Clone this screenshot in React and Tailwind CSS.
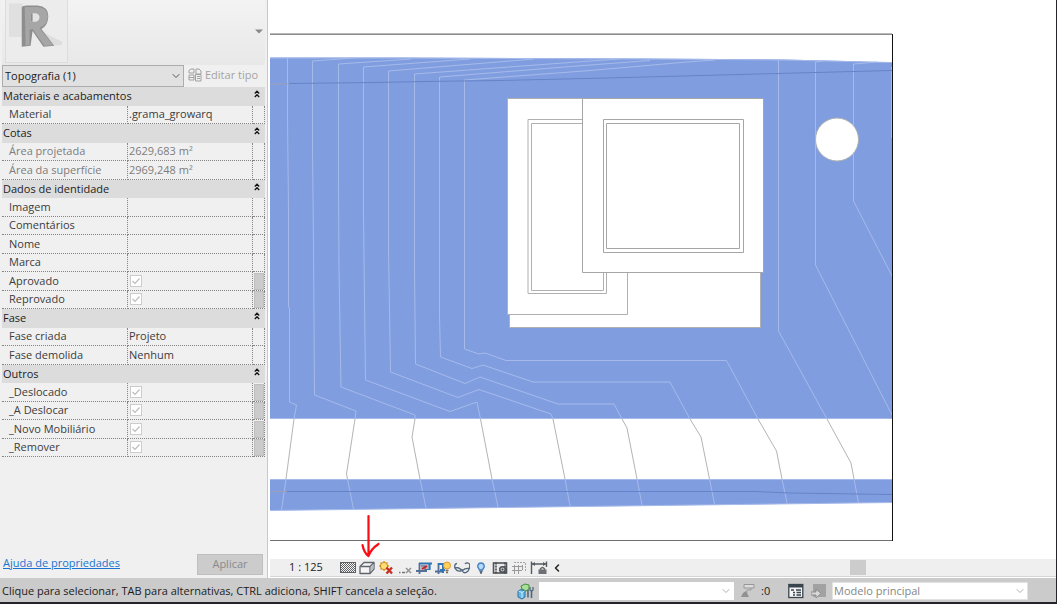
import React from "react";
import { ChevronDown, ChevronLeft } from "lucide-react";

const GROUPS = [
  { title: "Materiais e acabamentos", rows: [{ label: "Material", value: ".grama_growarq" }] },
  {
    title: "Cotas",
    rows: [
      { label: "Área projetada", value: "2629,683 m²", muted: true },
      { label: "Área da superfície", value: "2969,248 m²", muted: true },
    ],
  },
  {
    title: "Dados de identidade",
    rows: [
      { label: "Imagem" },
      { label: "Comentários" },
      { label: "Nome" },
      { label: "Marca" },
      { label: "Aprovado", check: true },
      { label: "Reprovado", check: true },
    ],
  },
  {
    title: "Fase",
    rows: [
      { label: "Fase criada", value: "Projeto" },
      { label: "Fase demolida", value: "Nenhum" },
    ],
  },
  {
    title: "Outros",
    rows: [
      { label: "_Deslocado", check: true },
      { label: "_A Deslocar", check: true },
      { label: "_Novo Mobiliário", check: true },
      { label: "_Remover", check: true },
    ],
  },
];

const CONTOURS = [
  "M287.5 58V116L288.5 212V307L289.5 308V402L296.5 405L294 419",
  "M354 58L312.5 61V149L313.5 245L314.5 395L356 411L355 419",
  "M411 59L338.5 64V183L339 270L341 387L415 415V419",
  "M470 59L363.5 67V216L364.5 300L365.5 380L450 411.5L477 402L480.5 419",
  "M534 59L388.5 71V250L390.5 372L458 397.5L479 389.5L551 414L553 419",
  "M620 59L590 61L414.5 74V270L415.5 364L465 383.5L480 377L558 404H614L622 419",
  "M650 60.5L590 65L439.5 77V316L440.5 357L472 368.5L483 365L533 382H670L690 419",
  "M715 60L687 62L590 70.5L464.5 80V349L479 354L485 353L506 360.5H726.5L758 419",
  "M778.5 59V331L827 419",
  "M823 61L815.5 62V265L892 415",
  "M877 62L853.5 64V201L892 276",
  "M891.5 67V138",
];

const STRIP_CONTOURS = [
  "M294 419L286 479",
  "M355 419L346.500 474L347.500 479",
  "M415 419L412 437L420 479",
  "M480.500 419L492 479",
  "M553 419L565 479",
  "M622 419L627 428L637 479",
  "M690 419L701 437L709.500 479",
  "M758 419L776.500 451L782 479",
  "M827 419L851 463L854 479",
];

const BAND_CONTOURS = [
  "M286 479L281.5 510",
  "M347.5 479L353.5 509",
  "M420 479L426 508",
  "M492 479L498 507",
  "M565 479L570 506",
  "M637 479L642 505",
  "M709.5 479L714.5 504",
  "M782 479L787 503",
  "M854 479L858.5 503",
];

function SitePlan() {
  return (
    <svg viewBox="270 0 786 559" preserveAspectRatio="xMinYMin meet" className="block w-full" role="img" aria-label="Topografia">
      <path d="M270 57.500L398 57.500L642 58.500L784 59.500L847 61L892 62.500V419H270Z" fill="#809edf" />
      <path d="M270 479H892V502.500L270 510.500Z" fill="#809edf" />
      <g fill="none" stroke="#a6baea" strokeWidth="1">
        <path d="M270 58L398 58L642 59L784 60L847 61.500L892 62.500" />
        <path d="M270 418.500H892M270 479.500H892M270 510.500L892 502.500" />
        {CONTOURS.map((d) => <path key={d} d={d} />)}
        {BAND_CONTOURS.map((d) => <path key={d} d={d} />)}
      </g>
      <g fill="none" stroke="#6583c8" strokeWidth="1">
        <path d="M289 83.500L375 82.500L424 81.500L500 80.500L607 78L892 70.500" />
        <path d="M287 491.500H755L790 493L892 494.500" />
      </g>
      <path d="M270 84.500L289 83.500M270 491.500H287" stroke="#9aa0b8" fill="none" />
      <g fill="none" stroke="#b4b4b4" strokeWidth="1">
        {STRIP_CONTOURS.map((d) => <path key={d} d={d} />)}
      </g>
      <g fill="#fff" stroke="#b0b0b0" strokeWidth="1">
        <path d="M509.500 272.500H760.500V327.500H509.500Z" />
        <path d="M507.500 98.500H627.500V314.500H507.500Z" />
        <path d="M528 119.500H606.500V293.500H528Z" />
        <path d="M531.500 123.500H603.500V290.500H531.500Z" />
        <path d="M582.500 98.500H763.500V272.500H582.500Z" stroke="#a6a6a6" />
        <path d="M603.500 119.500H743.500V252.500H603.500Z" stroke="#a6a6a6" />
        <path d="M606.500 123.500H739.500V248.500H606.500Z" stroke="#a6a6a6" />
        <circle cx="837" cy="139.500" r="21.500" />
      </g>
      <path d="M270 33.500H892" stroke="#b8b8b8" />
      <path d="M270 34.500H892" stroke="#8e8e8e" />
      <path d="M270 540.500H893" stroke="#6e6e6e" />
      <path d="M892.500 34V541" stroke="#111" />
      <path d="M368.500 516V554M362.500 545Q364 553 368.500 556Q371 549 378.500 544" fill="none" stroke="#fb0d14" strokeWidth="2.200" strokeLinecap="round" strokeLinejoin="round" />
    </svg>
  );
}

function Icon({ children, label }) {
  return (
    <button type="button" aria-label={label} className="h-4 w-4">
      <svg viewBox="0 0 16 16" className="h-4 w-4" fill="none">{children}</svg>
    </button>
  );
}

function ViewIcons() {
  const dots = [];
  for (let y = 3; y < 12; y++) for (let x = 1 + (y % 2); x < 15; x += 2) dots.push([x, y]);
  return (
    <div className="flex items-center gap-[3px]">
      <Icon label="Nível de detalhe">
        <rect x="0" y="2" width="16" height="11" fill="#5e6267" />
        {dots.map(([x, y]) => <rect key={x + "-" + y} x={x} y={y} width="1" height="1" fill="#f4f4f4" />)}
      </Icon>
      <Icon label="Estilo visual">
        <path d="M1 6.500L5 2.500H15V9L11 13.500H1Z" fill="#f5f5f5" stroke="#5f656c" strokeWidth="1.300" strokeLinejoin="round" />
        <path d="M1.500 6.500H11V13M11 6.500L15 2.500" stroke="#5f656c" strokeWidth="1.300" />
        <path d="M11.700 7L14.500 4V8.700L11.700 12Z" fill="#b9bec4" />
      </Icon>
      <Icon label="Caminho do sol">
        <path d="M6 1V11M1 6H11M2.500 2.500L9.500 9.500M9.500 2.500L2.500 9.500" stroke="#d99b22" strokeWidth="1.400" />
        <circle cx="6" cy="6" r="3.600" fill="#ffdf75" stroke="#c98b1c" />
        <path d="M8.500 7.500L14 13.500M14 7.500L8.500 13.500" stroke="#c92b25" strokeWidth="2.300" />
      </Icon>
      <Icon label="Sombras">
        <path d="M2 12.500H3.500M5 12.500H8" stroke="#777" strokeWidth="1.300" />
        <path d="M9 8L14 13M14 8L9 13" stroke="#969696" strokeWidth="1.600" />
      </Icon>
      <Icon label="Cortar vista">
        <path d="M3.500 3V14M0 11H11" stroke="#536f95" strokeWidth="1.800" />
        <rect x="5" y="5" width="7" height="5" fill="#f3a3a0" />
        <path d="M3 3.500H16M13.500 3V10" stroke="#3374b5" strokeWidth="2.200" />
        <path d="M5 6H9V10M9 9.500H13" stroke="#3374b5" strokeWidth="1.200" />
        <path d="M6 9L11 6" stroke="#b42725" strokeWidth="1.800" />
      </Icon>
      <Icon label="Mostrar região de recorte">
        <path d="M3.500 3V14M0 11.500H8" stroke="#536f95" strokeWidth="1.800" />
        <path d="M3 4H9M8 4V13M5 10H10" stroke="#3374b5" strokeWidth="2" />
        <circle cx="12" cy="5.500" r="3.500" fill="#ffd25f" stroke="#e09a2a" />
        <path d="M10.500 10.500H13.500M11 12.500H13" stroke="#7d6a50" strokeWidth="1.400" />
      </Icon>
      <Icon label="Ocultar temporariamente">
        <path d="M1 8Q0 4 3 3.500M1 8Q4 7 7 10M15 9Q17 4 14 3Q12 2.500 11 4" stroke="#53677c" strokeWidth="1.300" />
        <path d="M1 8Q3 12 7 11V9.500Q4 7 1 8ZM8.500 10.500Q9 13.500 12 12.500Q15 11 15 8.500Q11 8 8.500 10.500ZM7 10H9" fill="#e3e8ec" stroke="#53677c" strokeWidth="1.300" />
      </Icon>
      <Icon label="Revelar elementos ocultos">
        <path d="M8 3A3.200 3.200 0 0 1 10.300 8.500L9.500 10H6.500L5.700 8.500A3.200 3.200 0 0 1 8 3Z" fill="#b5d9ff" stroke="#427fc0" strokeWidth="1.400" />
        <path d="M6.500 11.500H9.500M7 13H9" stroke="#5d6875" strokeWidth="1.300" />
      </Icon>
      <Icon label="Propriedades da vista temporárias">
        <rect x="1.500" y="3" width="13" height="10" fill="#e8e8e8" stroke="#4f545a" strokeWidth="1.600" />
        <path d="M4 2.500V13.500M13 2.500V13.500" stroke="#45494f" strokeWidth="1.600" strokeDasharray="2 1" />
        <circle cx="10.500" cy="9.500" r="2.800" fill="#c8cacc" stroke="#494c50" strokeWidth="1.500" />
        <circle cx="10.500" cy="9.500" r="1" fill="#444" />
      </Icon>
      <Icon label="Modelo analítico">
        <path d="M1 6.500H12M1 10.500H11M3.500 5V14M7.500 5V14M11.500 5V10" stroke="#9a9a9a" />
        <path d="M3 2.500H14M14.500 3V12" stroke="#a4a4a4" strokeDasharray="2 1" />
      </Icon>
      <button type="button" aria-label="Revelar restrições" className="h-4 w-[18px]">
        <svg viewBox="0 0 18 16" className="h-4 w-[18px]" fill="none">
          <path d="M1.500 1.500V14M16.500 1.500V7M2 4H16" stroke="#555a60" strokeWidth="1.400" />
          <path d="M2 4L5 2V6ZM16 4L13 2V6Z" fill="#555a60" />
          <path d="M10.500 10V9Q12.500 6 14.500 9V10" stroke="#666" strokeWidth="1.500" />
          <rect x="8.500" y="9.500" width="8" height="4.500" fill="#6c6f73" />
        </svg>
      </button>
      <button type="button" aria-label="Recolher" className="flex h-4 w-3 items-center text-[#222]"><ChevronLeft size={12} strokeWidth={3} /></button>
    </div>
  );
}

function CollapseIcon() {
  return (
    <svg viewBox="0 0 6 8" className="h-2 w-1.5" fill="none" stroke="#111" strokeWidth="1.300">
      <path d="M.8 3.500L3 1.200L5.200 3.500M.8 7L3 4.700L5.200 7" />
    </svg>
  );
}

function PropertyRow({ row }) {
  const id = "prop-" + row.label.replace(/\s/g, "-");
  const tone = row.muted ? "text-[#7d7d7d]" : "text-[#3c3c3c]";
  return (
    <tr className={"odd:h-[19px] even:h-[18px] " + tone}>
      <th scope="row" className="border-b border-r border-dotted border-[#858585] pt-0 pb-px pl-[7px] text-left font-normal">
        {row.check ? <label htmlFor={id}>{row.label}</label> : row.label}
      </th>
      <td className="border-b border-r border-dotted border-[#858585] pt-0 pb-px pl-px">
        {row.check ? (
          <span className="ml-px grid h-3 w-3 place-items-center">
            <input id={id} type="checkbox" defaultChecked disabled className="col-start-1 row-start-1 h-3 w-3 appearance-none border border-[#cccccc] bg-white" />
            <svg viewBox="0 0 12 12" className="pointer-events-none col-start-1 row-start-1 h-3 w-3" fill="none">
              <path d="M2.500 6L5 8.500L9.500 3.500" stroke="#bdbdbd" strokeWidth="1.200" />
            </svg>
          </span>
        ) : row.value}
      </td>
      <td className="border-b border-r border-dotted border-[#858585] p-0 pl-px">
        {row.check && <button type="button" disabled aria-label={"Associar " + row.label} className="block h-[17px] w-full border border-[#bfbfbf] bg-[#cbcbcb]" />}
      </td>
    </tr>
  );
}

function Properties() {
  return (
    <aside className="flex w-[270px] shrink-0 flex-col border-r-2 border-white bg-[#f0f0f0]">
      <div className="flex flex-1 flex-col border-r border-[#c8c8c8] pl-0.5 pr-[2px]">
        <div className="flex h-[65px] items-start justify-between bg-linear-to-b from-[#f3f3f3] to-[#e8e8e8] pl-[3px]">
          <div className="h-[63px] w-[63px] border border-t-0 border-[#dcdcdc] bg-[#ececec]">
            <svg viewBox="0 0 62 62" className="h-full w-full">
              <path d="M3 3H17V37H3Z" fill="#e0e0e0" />
              <path d="M33 30L57 42V45L48 46Z" fill="#dddddd" />
              <path d="M16 7Q17 5 21 5H32Q43 6 43 16Q43 25 36 29L49 46L38 47L27 31L25 46L16 47Z" fill="#8e8e8e" />
              <path d="M19 6.500H32Q42 7 42.500 16Q42 25 34 28L48 45.500L39 46L27 29L24 30V45L20 46Z" fill="#a6a6a6" />
              <path d="M25 13H30Q34 13.500 34 17Q34 21 30 21.500H25Z" fill="#e3e3e3" />
              <path d="M25 13H27V21.500H25Z" fill="#8c8c8c" />
            </svg>
          </div>
          <button type="button" aria-label="Seletor de tipo" className="mt-[29px] mr-0.5">
            <svg viewBox="0 0 8 5" className="h-[5px] w-2"><path d="M0 .5H8L4 4.500Z" fill="#8a8a8a" /></svg>
          </button>
        </div>
        <div className="flex h-[22px] items-start">
          <div className="grid w-[182px] items-center">
            <select aria-label="Categoria" className="col-start-1 row-start-1 h-[22px] appearance-none border border-[#adadad] bg-[#e1e1e1] pl-0.5 text-[11px] text-[#1c1c1c]">
              <option>Topografia (1)</option>
            </select>
            <ChevronDown size={12} className="pointer-events-none col-start-1 row-start-1 mr-0.5 justify-self-end text-[#555]" />
          </div>
          <button type="button" disabled className="ml-1 flex h-5 items-center gap-[3px] text-[11px] text-[#a3a3a3]">
            <svg viewBox="0 0 14 14" className="h-3.5 w-3.5" fill="none" stroke="#a0a0a0">
              <path d="M1 2.500L3 1H6V5H1ZM8 1H11L13 3V6H8ZM1 7H6V12H1ZM7.500 6.500H13V13H7.500ZM1 9.500H6M9 8.500H12M9 10.500H12" />
            </svg>
            Editar tipo
          </button>
        </div>
        <table className="w-full table-fixed border-separate border-spacing-0 text-[11px] leading-[16px]">
          <colgroup><col className="w-[126px]" /><col className="w-[125px]" /><col /></colgroup>
          <tbody>
            {GROUPS.map((group) => (
              <React.Fragment key={group.title}>
                <tr className="bg-[#dcdcdc] text-[#1c1c1c] odd:h-[19px] even:h-[18px]">
                  <th colSpan={3} scope="colgroup" className="pt-0 pb-px pl-px pr-[5px] text-left font-normal">
                    <span className="flex items-center justify-between">
                      {group.title}
                      <button type="button" aria-label={"Recolher " + group.title} className="mb-1"><CollapseIcon /></button>
                    </span>
                  </th>
                </tr>
                {group.rows.map((row) => <PropertyRow key={row.label} row={row} />)}
              </React.Fragment>
            ))}
          </tbody>
        </table>
        <div className="mt-auto flex items-center justify-between pb-[3px] pl-px pr-0.5 text-[11px]">
          <a href="#ajuda" className="pb-[3px] text-[#1a74cf] underline">Ajuda de propriedades</a>
          <button type="button" disabled className="h-[21px] w-[66px] border border-[#bfbfbf] bg-[#cccccc] text-[#8a8a8a]">Aplicar</button>
        </div>
      </div>
    </aside>
  );
}

function StatusBar() {
  return (
    <footer className="flex h-6 items-center bg-[#cbcbcb] pt-0.5 pl-0.5 text-[11px] text-[#1c1c1c]">
      <p className="min-w-0 flex-1 truncate">Clique para selecionar, TAB para alternativas, CTRL adiciona, SHIFT cancela a seleção.</p>
      <svg viewBox="0 0 17 17" className="mr-[5px] h-[17px] w-[17px]" fill="none" aria-hidden="true">
        <path d="M4 3L8 1L12 2V6L9 8L5 6Z" fill="#a7df9a" stroke="#468b43" />
        <path d="M1 8L4 6.500L8 8V14L5 16L1 14Z" fill="#65b6e2" stroke="#2d719e" />
        <path d="M1.500 8L5 9.500L7.500 8M5 9.500V15" stroke="#c8efff" />
        <path d="M11 7V14.500M14.500 9V15" stroke="#52677a" strokeWidth="1.600" />
        <path d="M13 4V7L14.500 8.500L16 7V4" stroke="#52677a" strokeWidth="1.300" />
      </svg>
      <div className="grid w-[195px] items-center">
        <select aria-label="Conjunto de trabalho ativo" className="col-start-1 row-start-1 h-[18px] appearance-none bg-white"><option></option></select>
        <ChevronDown size={12} className="pointer-events-none col-start-1 row-start-1 mr-0.5 justify-self-end text-[#b0b0b0]" />
      </div>
      <button type="button" className="ml-1.5 flex w-12 items-center gap-[5px]">
        <svg viewBox="0 0 16 16" className="h-4 w-4" fill="none" aria-hidden="true">
          <path d="M4 1.500H14V5H4ZM11 5V7H7V10" stroke="#979797" fill="#dcdcdc" />
          <path d="M6 8L9 14H1L3 10Z" fill="#919191" />
        </svg>
        <span>:0</span>
      </button>
      <button type="button" aria-label="Opções de projeto" className="h-4 w-4">
        <svg viewBox="0 0 16 16" className="h-4 w-4" fill="none">
          <rect x=".8" y="1.500" width="14" height="13" fill="#f4f4f4" stroke="#39444f" strokeWidth="1.300" />
          <path d="M1 3H15" stroke="#39444f" strokeWidth="3" />
          <path d="M3 7H6M8 7H13M5 9.500H7M8.500 9.500H13M5 12H7M8.500 12H13" stroke="#39444f" strokeWidth="1.300" />
        </svg>
      </button>
      <button type="button" disabled aria-label="Adicionar ao conjunto" className="ml-[7px] h-4 w-4">
        <svg viewBox="0 0 16 16" className="h-4 w-4" fill="none">
          <rect x="2" y="1" width="13" height="13" fill="#a2a2a2" />
          <path d="M0 9H5V6L10 10.500L5 15V12H0Z" fill="#d8d8d8" stroke="#8d8d8d" />
        </svg>
      </button>
      <div className="ml-[5px] mr-7 grid w-[196px] items-center">
        <select aria-label="Opção de projeto ativa" className="col-start-1 row-start-1 h-[18px] appearance-none border border-[#e2e2e2] bg-white pl-px text-[#868686]"><option>Modelo principal</option></select>
        <ChevronDown size={12} className="pointer-events-none col-start-1 row-start-1 mr-0.5 justify-self-end text-[#b0b0b0]" />
      </div>
    </footer>
  );
}

export default function App() {
  return (
    <div className="flex min-h-screen flex-col border-r border-b-2 border-[#26242a] bg-white font-['Open_Sans','Noto_Sans',sans-serif]">
      <div className="flex flex-1">
        <Properties />
        <main className="flex min-w-0 flex-1 flex-col">
          <div className="flex-1"><SitePlan /></div>
          <div className="flex h-[17px] items-center bg-[#efefef]">
            <span className="w-[70px] pl-[19px] text-[11px] text-[#222]">1 : 125</span>
            <ViewIcons />
            <div className="ml-auto mr-[190px] h-[15px] w-4 bg-[#cccccc]" />
          </div>
          <div className="h-0.5 border-t border-[#d5d5d5] bg-white" />
        </main>
      </div>
      <StatusBar />
    </div>
  );
}
